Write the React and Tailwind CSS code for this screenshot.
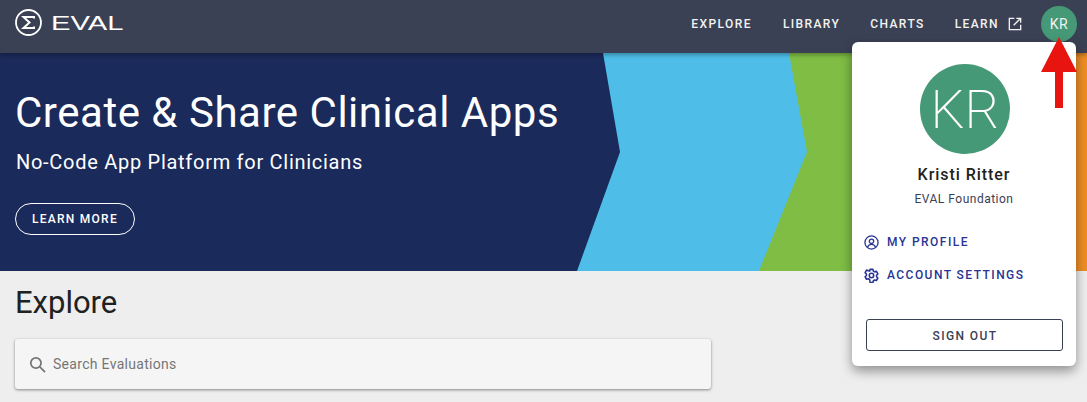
import React from "react";

function UserCircle() {
  return (
    <svg width="15" height="15" viewBox="0 0 24 24" fill="none" stroke="#283593" strokeWidth="2.100">
      <circle cx="12" cy="12" r="10.500" />
      <circle cx="12" cy="10" r="3.500" />
      <path d="M5.500 19.500c1.500-3 4-4.500 6.500-4.500s5 1.500 6.500 4.500" />
    </svg>
  );
}

function Gear() {
  return (
    <svg width="15" height="15" viewBox="0 0 24 24" fill="none" stroke="#283593" strokeWidth="2.500" strokeLinejoin="round">
      <path d="M9.700 2.500h4.600l.7 2.800 2.100 1.200 2.800-.8 2.300 4-2.100 2.100v2.400l2.100 2.100-2.300 4-2.800-.8-2.100 1.200-.7 2.800H9.700L9 18.700l-2.100-1.200-2.800.8-2.300-4 2.100-2.100v-2.400L1.800 7.700l2.300-4 2.800.8L9 5.300z" transform="translate(0 -.3)" />
      <circle cx="12" cy="12" r="3.500" />
    </svg>
  );
}

export default function App() {
  return (
    <div className="relative h-[402px] w-[1087px] overflow-hidden bg-[#eeeeee] font-['Roboto',sans-serif]">
      <header className="relative z-10 flex h-[53px] items-center justify-between bg-[#3b4154] pr-[10px] pb-[5px] pl-[15px] shadow-[0_2px_4px_rgba(0,0,0,0.3)]">
        <div className="-mt-[3px] flex items-center gap-[9px] text-white">
          <svg width="27" height="27" viewBox="0 0 27 27" fill="none" stroke="white">
            <circle cx="13.500" cy="13.500" r="12.500" strokeWidth="1.800" />
            <path d="M19 9.500V8H8.500l6 5.500-6 5.500H19v-1.500" strokeWidth="2" />
          </svg>
          <span className="origin-left scale-x-[1.46] font-['Liberation_Sans',sans-serif] text-[20px] leading-none">EVAL</span>
        </div>
        <nav className="flex items-center text-[12px] font-medium tracking-[1.4px] text-[#f2f2f2]">
          <span>EXPLORE</span>
          <span className="ml-[31px]">LIBRARY</span>
          <span className="ml-[30px]">CHARTS</span>
          <span className="ml-[30px]">LEARN</span>
          <svg className="ml-[8px]" width="16" height="16" viewBox="0 0 24 24" fill="none" stroke="#f2f2f2" strokeWidth="2">
            <path d="M11 3.500H3.500v17h17V13M14 3.500h6.500V10M20.500 3.500 10 14" />
          </svg>
          <div className="ml-[18px] flex h-[36px] w-[36px] items-center justify-center rounded-full bg-[#459976] text-[14px] font-normal tracking-[0.5px]">KR</div>
        </nav>
      </header>

      <section className="relative h-[218px] pl-[16px] text-white">
        <svg className="absolute inset-0" width="1087" height="218" viewBox="0 0 1087 218">
          <rect width="1087" height="218" fill="#ee8e25" />
          <polygon points="0,0 1060,0 1050,99 1030,218 0,218" fill="#7fbd45" />
          <polygon points="0,0 789,0 807,99 759,218 0,218" fill="#4ebee8" />
          <polygon points="0,0 603,0 620,99 577,218 0,218" fill="#1a2a5a" />
        </svg>
        <div className="relative flex flex-col items-start">
          <h1 className="mt-[34px] -ml-px text-[42px] leading-[52px] font-normal tracking-[0.52px]">Create &amp; Share Clinical Apps</h1>
          <p className="mt-[10px] text-[20px] leading-[26px] tracking-[0.72px]">No-Code App Platform for Clinicians</p>
          <button className="mt-[28px] -ml-px flex h-[32px] w-[120px] items-center justify-center rounded-full border border-white text-[12px] font-medium tracking-[1.25px]">LEARN MORE</button>
        </div>
      </section>

      <main className="px-[15px]">
        <h2 className="mt-[14px] text-[31px] leading-[36px] text-[#212121]">Explore</h2>
        <div className="mt-[18px] flex h-[50px] w-[696px] items-center rounded-[3px] bg-[#f5f5f5] pl-[13px] shadow-[0_1px_3px_rgba(0,0,0,0.45)]">
          <svg width="19" height="19" viewBox="0 0 24 24" fill="none" stroke="#757575" strokeWidth="2.200">
            <circle cx="10" cy="10" r="6.500" />
            <path d="m15 15 6.500 6.500" />
          </svg>
          <span className="ml-[6px] text-[14px] tracking-[0.3px] text-[#757575]">Search Evaluations</span>
        </div>
      </main>

      <aside className="absolute top-[42px] left-[852px] z-20 flex h-[324px] w-[224px] flex-col items-center rounded-[6px] bg-white shadow-[0_5px_12px_rgba(0,0,0,0.4)]">
        <div className="mt-[22px] ml-[2px] flex h-[90px] w-[90px] items-center justify-center rounded-full bg-[#459976] text-[54px] font-extralight text-white">KR</div>
        <div className="mt-[9px] text-[16px] leading-[24px] font-medium tracking-[0.95px] text-[#212121]">Kristi Ritter</div>
        <div className="mt-[3px] text-[12px] leading-[18px] tracking-[0.5px] text-[#3b4154]">EVAL Foundation</div>
        <div className="mt-[25px] flex items-center gap-[8px] self-start pl-[12px] text-[12px] font-medium tracking-[1.45px] text-[#283593]">
          <UserCircle />
          <span>MY PROFILE</span>
        </div>
        <div className="mt-[15px] flex items-center gap-[8px] self-start pl-[12px] text-[12px] font-medium tracking-[1.45px] text-[#283593]">
          <Gear />
          <span>ACCOUNT SETTINGS</span>
        </div>
        <button className="mt-[35px] flex h-[32px] w-[197px] items-center justify-center rounded-[3px] border border-[#3b4154] pt-[1px] pl-[2px] text-[12px] font-medium tracking-[1.4px] text-[#3b4154]">SIGN OUT</button>
      </aside>

      <svg className="absolute top-[37px] left-[1041px] z-30" width="36" height="71" viewBox="0 0 36 71">
        <polygon points="18,0 36,35 22,35 22,71 14,71 14,35 0,35" fill="#e8140f" />
      </svg>
    </div>
  );
}
